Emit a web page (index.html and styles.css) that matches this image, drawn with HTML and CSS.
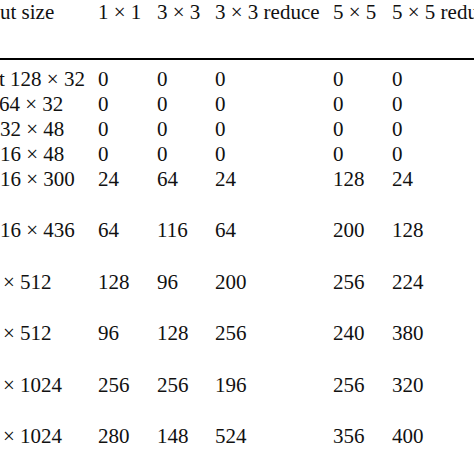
FILE: index.html
```html
<!DOCTYPE html>
<html>
<head>
<meta charset="utf-8">
<link rel="stylesheet" href="styles.css">
</head>
<body>
<table class="tbl">
  <colgroup>
    <col class="c1"><col class="c2"><col class="c3"><col class="c4"><col class="c5"><col class="c6">
  </colgroup>
  <thead>
    <tr class="head">
      <th>ut size</th><th>1 × 1</th><th>3 × 3</th><th>3 × 3 reduce</th><th>5 × 5</th><th>5 × 5 reduce</th>
    </tr>
  </thead>
  <tbody>
    <tr class="short first"><td class="cut1">t 128 × 32</td><td>0</td><td>0</td><td>0</td><td>0</td><td>0</td></tr>
    <tr class="short"><td class="cut2">64 × 32</td><td>0</td><td>0</td><td>0</td><td>0</td><td>0</td></tr>
    <tr class="short"><td>32 × 48</td><td>0</td><td>0</td><td>0</td><td>0</td><td>0</td></tr>
    <tr class="short"><td>16 × 48</td><td>0</td><td>0</td><td>0</td><td>0</td><td>0</td></tr>
    <tr class="tall"><td>16 × 300</td><td>24</td><td>64</td><td>24</td><td>128</td><td>24</td></tr>
    <tr class="tall"><td>16 × 436</td><td>64</td><td>116</td><td>64</td><td>200</td><td>128</td></tr>
    <tr class="tall"><td class="pad">× 512</td><td>128</td><td>96</td><td>200</td><td>256</td><td>224</td></tr>
    <tr class="tall"><td class="pad">× 512</td><td>96</td><td>128</td><td>256</td><td>240</td><td>380</td></tr>
    <tr class="tall"><td class="pad">× 1024</td><td>256</td><td>256</td><td>196</td><td>256</td><td>320</td></tr>
    <tr class="tall"><td class="pad">× 1024</td><td>280</td><td>148</td><td>524</td><td>356</td><td>400</td></tr>
  </tbody>
</table>
</body>
</html>
```

FILE: styles.css
```css
html, body {
  margin: 0;
  padding: 0;
  background: #ffffff;
  overflow: hidden;
  width: 474px;
  height: 474px;
}
.tbl {
  border-collapse: collapse;
  table-layout: fixed;
  width: 530px;
  font-family: "Liberation Serif", "Times New Roman", serif;
  font-size: 21px;
  color: #111111;
}
.c1 { width: 98px; }
.c2 { width: 59px; }
.c3 { width: 58px; }
.c4 { width: 118px; }
.c5 { width: 59px; }
.c6 { width: 138px; }
.tbl th, .tbl td {
  padding: 0;
  text-align: left;
  white-space: nowrap;
  vertical-align: top;
  font-weight: normal;
  overflow: visible;
}
.head th {
  line-height: 24px;
  height: 24px;
  padding-bottom: 33.5px;
  border-bottom: 2.5px solid #000000;
}
.tbl td {
  line-height: 25px;
}
.short td { height: 25px; }
.first td { padding-top: 7.5px; }
.tall td { height: 51.4px; }
.cut1 { text-indent: -1px; }
.cut2 { text-indent: -1px; }
.pad { padding-left: 3px !important; }
```
